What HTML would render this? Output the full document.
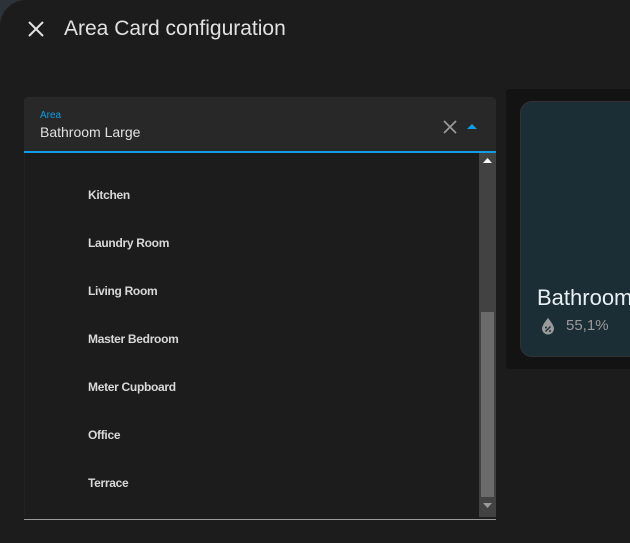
<!DOCTYPE html>
<html><head><style>
*{margin:0;padding:0;box-sizing:border-box}
html,body{width:630px;height:543px;overflow:hidden}
body{background:#1c1c1c;font-family:"Liberation Sans",sans-serif;position:relative;color:#e1e1e1}
.corner{position:absolute;left:0;top:0;width:30px;height:30px;background:#2b3338}
.corner2{position:absolute;left:0;top:0;width:30px;height:30px;background:#1c1c1c;border-top-left-radius:26px}
.a{position:absolute}
.item{position:absolute;left:88px;font-size:12px;font-weight:bold;color:#d8d8d8;letter-spacing:-0.3px}
.clip{position:absolute;left:506px;top:89px;width:124px;height:280px;overflow:hidden}
</style></head><body>
<div class="corner"></div><div class="corner2"></div>
<svg class="a" style="left:27px;top:20px" width="18" height="18" viewBox="0 0 18 18"><path d="M2 2L16 16M16 2L2 16" stroke="#e1e1e1" stroke-width="2"/></svg>
<div class="a" style="left:64px;top:17px;font-size:21px;color:#e1e1e1">Area Card configuration</div>

<div class="a" style="left:24px;top:97px;width:472px;height:56px;background:#282828;border-radius:4px 4px 0 0;border-bottom:2px solid #0d9ee6"></div>
<div class="a" style="left:40px;top:110px;font-size:10px;color:#0d9ee6">Area</div>
<div class="a" style="left:40px;top:124px;font-size:14px;color:#e1e1e1">Bathroom Large</div>
<svg class="a" style="left:443px;top:120px" width="14" height="14" viewBox="0 0 14 14"><path d="M1 1L13 13M13 1L1 13" stroke="#9a9a9a" stroke-width="1.7"/></svg>
<svg class="a" style="left:466px;top:124px" width="12" height="6"><path d="M1 5L6 0L11 5Z" fill="#0d9ee6"/></svg>

<div class="a" style="left:24px;top:153px;width:472px;height:364px;background:#1c1c1c;border-left:1px solid #222"></div>
<div class="a" style="left:479px;top:153px;width:17px;height:364px;background:#424242"></div>
<div class="a" style="left:481px;top:312px;width:13px;height:185px;background:#6b6b6b"></div>
<svg class="a" style="left:483px;top:158px" width="9" height="5"><path d="M0 5L4.5 0L9 5Z" fill="#fff"/></svg>
<svg class="a" style="left:483px;top:503px" width="9" height="5"><path d="M0 0L4.5 5L9 0Z" fill="#999"/></svg>
<div class="a" style="left:24px;top:519px;width:472px;height:1px;background:#9a9a9a"></div>

<div class="item" style="top:188px">Kitchen</div>
<div class="item" style="top:236px">Laundry Room</div>
<div class="item" style="top:284px">Living Room</div>
<div class="item" style="top:332px">Master Bedroom</div>
<div class="item" style="top:380px">Meter Cupboard</div>
<div class="item" style="top:428px">Office</div>
<div class="item" style="top:476px">Terrace</div>

<div class="clip">
<div class="a" style="left:0;top:0;width:130px;height:280px;background:#131313;border-radius:3px"></div>
<div class="a" style="left:14px;top:12px;width:130px;height:256px;background:#1b2d35;border:1px solid #333;border-radius:12px"></div>
<div class="a" style="left:31px;top:196px;font-size:22px;color:#e8f0f4;white-space:nowrap">Bathroom Large</div>
<svg class="a" style="left:35px;top:229px" width="14" height="17" viewBox="0 0 14 17"><path d="M7 0C7 0 1 7 1 10.5A6 6 0 0 0 13 10.5C13 7 7 0 7 0Z" fill="#9a9a9a"/><path d="M4.5 13.5L9.5 8.5" stroke="#1b2d35" stroke-width="1.3"/><circle cx="5" cy="9.5" r="1" fill="#1b2d35"/><circle cx="9" cy="13" r="1" fill="#1b2d35"/></svg>
<div class="a" style="left:60px;top:228px;font-size:15px;color:#9a9a9a">55,1%</div>
</div>
</body></html>
